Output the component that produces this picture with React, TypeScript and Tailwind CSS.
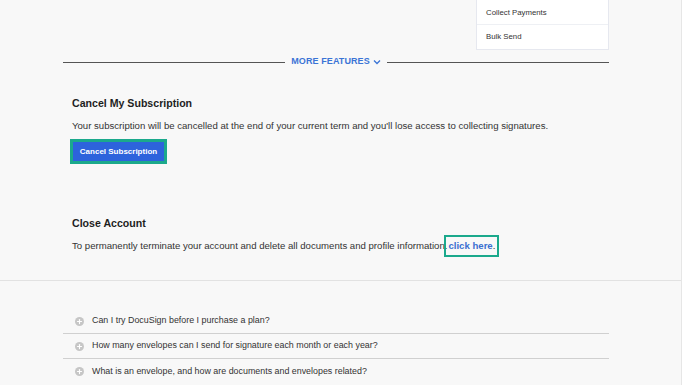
import { Plus } from "lucide-react";

const font = { fontFamily: '"Liberation Sans", Arial, sans-serif' };

const faqs = [
  "Can I try DocuSign before I purchase a plan?",
  "How many envelopes can I send for signature each month or each year?",
  "What is an envelope, and how are documents and envelopes related?",
];

function FaqRow({ q, last }: { q: string; last?: boolean }) {
  return (
    <div className={`flex h-[25px] items-center gap-[8px] pl-[12px] ${last ? "" : "border-b border-[#d0d0d0]"}`}>
      <span className="flex h-[9px] w-[9px] items-center justify-center rounded-full bg-[#c6c6c6]">
        <Plus className="h-[7px] w-[7px] text-white" strokeWidth={4} />
      </span>
      <span className="text-[8.9px] text-[#333]">{q}</span>
    </div>
  );
}

export default function App() {
  return (
    <div className="h-[385px] w-full overflow-hidden border-r border-[#e6e6e6] bg-[#f8f8f8]" style={font}>
      <div className="mx-[63px] w-[546px]">
        {/* dropdown tail */}
        <div className="flex justify-end">
          <div className="w-[133px] border-x border-b border-[#e6e8ef] bg-white text-[7.8px] text-[#333]">
            <div className="flex h-[25px] items-center border-b border-[#eef0f4] pl-[9px] pt-[1px]">Collect Payments</div>
            <div className="flex h-[24px] items-center pl-[9px]">Bulk Send</div>
          </div>
        </div>

        <div className="mt-[5px] flex h-[14px] items-center">
          <div className="h-px flex-1 bg-[#555]" />
          <span className="flex items-center gap-[3px] px-[6px] text-[9px] font-bold tracking-[0.1px] text-[#3b74d6]">
            MORE FEATURES
            <svg width="8" height="6" viewBox="0 0 8 6" fill="none">
              <path d="M1 1.5 4 4.5 7 1.5" stroke="#3b74d6" strokeWidth="1.3" />
            </svg>
          </span>
          <div className="h-px flex-1 bg-[#555]" />
        </div>

        <div className="pl-[9px]">
          <h2 className="mt-[27px] text-[10.6px] font-bold leading-[14px] text-[#1e1e1e]">Cancel My Subscription</h2>
          <p className="mt-[10px] text-[9.6px] leading-[12px] text-[#333]">
            Your subscription will be cancelled at the end of your current term and you'll lose access to collecting signatures.
          </p>
          <button className="-ml-[2px] mt-[7px] flex h-[25px] w-[97px] items-center justify-center border-[3px] border-[#1ba98c] bg-[#2d63dc] text-[8px] font-bold text-white">
            Cancel Subscription
          </button>

          <h2 className="mt-[52px] text-[10.6px] font-bold leading-[14px] text-[#1e1e1e]">Close Account</h2>
          <div className="mt-[5px] flex h-[22px] items-center text-[9.6px] text-[#333]">
            <span>To permanently terminate your account and delete all documents and profile information.</span>
            <span className="-ml-[3px] flex h-[22px] items-center border-[2px] border-[#1ba98c] px-[2px] font-bold text-[#3a6fd1]">
              click here<span className="font-normal text-[#333]">.</span>
            </span>
          </div>
        </div>
      </div>

      <div className="mt-[23px] h-px w-full bg-[#e2e2e2]" />

      <div className="mx-[63px] mt-[28px] w-[546px]">
        {faqs.map((q, i) => (
          <FaqRow key={q} q={q} last={i === faqs.length - 1} />
        ))}
      </div>
    </div>
  );
}
